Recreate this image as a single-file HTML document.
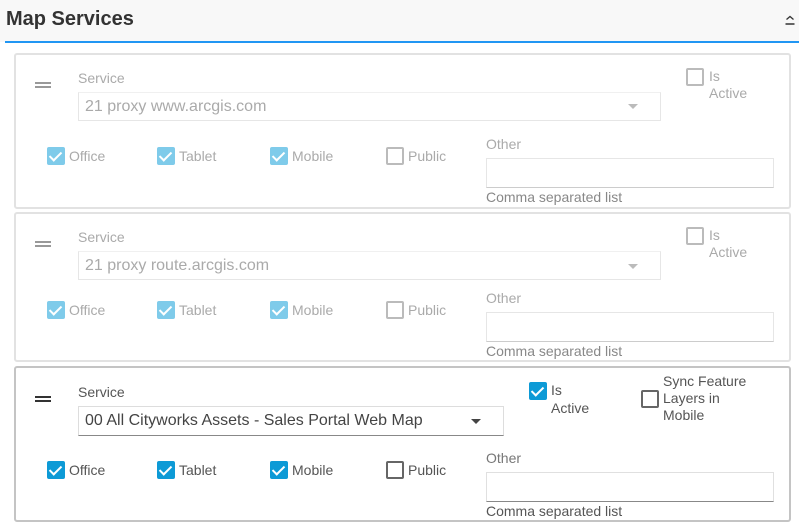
<!DOCTYPE html><html><head><meta charset="utf-8"><style>
*{box-sizing:border-box;margin:0;padding:0}
body{width:799px;height:523px;background:#fff;font-family:"Liberation Sans",sans-serif;position:relative;overflow:hidden;color:#555}
.a{position:absolute;white-space:nowrap}
.hdr{left:0;top:0;width:799px;height:42px;background:#f8f8f8}
.line{left:5px;top:41px;width:794px;height:2px;background:#2196f3}
.card{border:2px solid #e2e2e2;border-radius:3px;background:#fff}
.card.on{border-color:#c4c4c4}
.lbl{font-size:14px;color:#aaa}
.on-t{color:#555}
.sel{border:1px solid #e6e6e6;border-top-color:#f0f0f0;font-size:16px;color:#aaa;padding:4px 6px;line-height:20px}
.sel.on{border-color:#ddd;border-bottom:1px solid #888;color:#444}
.cb{width:18px;height:18px;border-radius:2px}
.cb.c{background:#7fcbea}
.cb.c.on{background:#0d9ad6}
.cb.u{border:2px solid #bbb}
.cb.u.on{border-color:#666}
.cb.c::after{content:"";position:absolute;left:5px;top:2px;width:5px;height:10px;border:solid #fff;border-width:0 2px 2px 0;transform:rotate(45deg)}
.drag{width:16px;height:6px;border-top:2px solid #999;border-bottom:2px solid #999}
.drag.on{border-color:#333}
.arrow{width:0;height:0;border-left:5px solid transparent;border-right:5px solid transparent;border-top:5px solid #bbb}
.arrow.on{border-top-color:#444}
.inp{border:1px solid #e6e6e6;border-bottom-color:#ccc}
.inp.on{border-color:#e0e0e0;border-bottom-color:#888}
</style></head><body>
<div class="a hdr"></div>
<div class="a" style="left:6px;top:8px;font-size:20px;font-weight:bold;color:#333">Map Services</div>
<svg class="a" style="left:784px;top:14px" width="12" height="12" viewBox="0 0 12 12"><path d="M2.5 5.5 L6 2.5 L9.5 5.5" fill="none" stroke="#333" stroke-width="1.3"/><path d="M1.5 10 H10.5" stroke="#333" stroke-width="1.5"/></svg>
<div class="a line"></div>

<!-- card 1 -->
<div class="a card" style="left:14px;top:53px;width:777px;height:156px"></div>
<div class="a drag" style="left:35px;top:82px"></div>
<div class="a lbl" style="left:78px;top:70px">Service</div>
<div class="a sel" style="left:78px;top:92px;width:583px;height:29px">21 proxy www.arcgis.com</div>
<div class="a arrow" style="left:628px;top:104px"></div>
<div class="a cb u" style="left:686px;top:68px"></div>
<div class="a lbl" style="left:709px;top:68px;line-height:17px">Is<br>Active</div>
<div class="a cb c" style="left:47px;top:147px"></div><div class="a lbl" style="left:69px;top:148px">Office</div>
<div class="a cb c" style="left:157px;top:147px"></div><div class="a lbl" style="left:179px;top:148px">Tablet</div>
<div class="a cb c" style="left:270px;top:147px"></div><div class="a lbl" style="left:292px;top:148px">Mobile</div>
<div class="a cb u" style="left:386px;top:147px"></div><div class="a lbl" style="left:408px;top:148px">Public</div>
<div class="a lbl" style="left:486px;top:136px">Other</div>
<div class="a inp" style="left:486px;top:158px;width:288px;height:30px"></div>
<div class="a lbl" style="left:486px;top:189px;color:#888">Comma separated list</div>

<!-- card 2 -->
<div class="a card" style="left:14px;top:212px;width:777px;height:150px"></div>
<div class="a drag" style="left:35px;top:241px"></div>
<div class="a lbl" style="left:78px;top:229px">Service</div>
<div class="a sel" style="left:78px;top:251px;width:583px;height:29px">21 proxy route.arcgis.com</div>
<div class="a arrow" style="left:628px;top:264px"></div>
<div class="a cb u" style="left:686px;top:227px"></div>
<div class="a lbl" style="left:709px;top:227px;line-height:17px">Is<br>Active</div>
<div class="a cb c" style="left:47px;top:301px"></div><div class="a lbl" style="left:69px;top:302px">Office</div>
<div class="a cb c" style="left:157px;top:301px"></div><div class="a lbl" style="left:179px;top:302px">Tablet</div>
<div class="a cb c" style="left:270px;top:301px"></div><div class="a lbl" style="left:292px;top:302px">Mobile</div>
<div class="a cb u" style="left:386px;top:301px"></div><div class="a lbl" style="left:408px;top:302px">Public</div>
<div class="a lbl" style="left:486px;top:290px">Other</div>
<div class="a inp" style="left:486px;top:312px;width:288px;height:30px"></div>
<div class="a lbl" style="left:486px;top:343px;color:#888">Comma separated list</div>

<!-- card 3 -->
<div class="a card on" style="left:14px;top:366px;width:777px;height:156px"></div>
<div class="a drag on" style="left:35px;top:396px"></div>
<div class="a lbl on-t" style="left:78px;top:384px">Service</div>
<div class="a sel on" style="left:78px;top:406px;width:426px;height:30px">00 All Cityworks Assets - Sales Portal Web Map</div>
<div class="a arrow on" style="left:471px;top:419px"></div>
<div class="a cb c on" style="left:529px;top:382px"></div>
<div class="a lbl on-t" style="left:551px;top:381px;line-height:18px">Is<br>Active</div>
<div class="a cb u on" style="left:641px;top:390px"></div>
<div class="a lbl on-t" style="left:663px;top:373px;line-height:17px">Sync Feature<br>Layers in<br>Mobile</div>
<div class="a cb c on" style="left:47px;top:461px"></div><div class="a lbl on-t" style="left:69px;top:462px">Office</div>
<div class="a cb c on" style="left:157px;top:461px"></div><div class="a lbl on-t" style="left:179px;top:462px">Tablet</div>
<div class="a cb c on" style="left:270px;top:461px"></div><div class="a lbl on-t" style="left:292px;top:462px">Mobile</div>
<div class="a cb u on" style="left:386px;top:461px"></div><div class="a lbl on-t" style="left:408px;top:462px">Public</div>
<div class="a lbl" style="left:486px;top:450px;color:#777">Other</div>
<div class="a inp on" style="left:486px;top:472px;width:288px;height:30px"></div>
<div class="a lbl on-t" style="left:486px;top:503px">Comma separated list</div>
</body></html>
